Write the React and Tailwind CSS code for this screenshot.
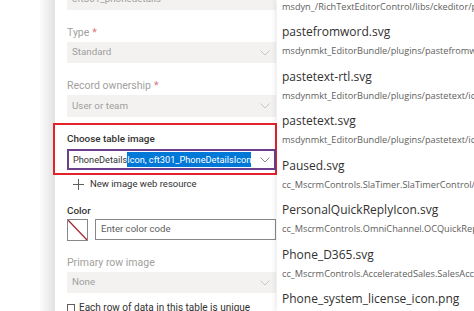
import React from 'react';

const font = { fontFamily: 'Roboto, "Open Sans", sans-serif' };

// Lista de recursos que aparece en el desplegable de la derecha
const resources = [
  { name: 'RichTextEditor.svg', path: 'msdyn_/RichTextEditorControl/libs/ckeditor/plugins/pastefromword/icons' },
  { name: 'pastefromword.svg', path: 'msdynmkt_EditorBundle/plugins/pastefromword/icons/pastefromword.svg' },
  { name: 'pastetext-rtl.svg', path: 'msdynmkt_EditorBundle/plugins/pastetext/icons/pastetext-rtl.svg' },
  { name: 'pastetext.svg', path: 'msdynmkt_EditorBundle/plugins/pastetext/icons/pastetext.svg' },
  { name: 'Paused.svg', path: 'cc_MscrmControls.SlaTimer.SlaTimerControl/img/Paused.svg' },
  { name: 'PersonalQuickReplyIcon.svg', path: 'cc_MscrmControls.OmniChannel.OCQuickReplyPreview/img/Personal.svg' },
  { name: 'Phone_D365.svg', path: 'cc_MscrmControls.AcceleratedSales.SalesAcceleratio...' },
  { name: 'Phone_system_license_icon.png', path: 'cc_MscrmControls.AcceleratedSales.SalesAcceleration/img' },
];

const Chevron = ({ color = '#a19f9d' }) => (
  <svg width="10" height="6" viewBox="0 0 10 6" fill="none" className="shrink-0">
    <path d="M0.5 0.5 L5 5 L9.5 0.5" stroke={color} strokeWidth="1" />
  </svg>
);

const DisabledInput = ({ text, chevron = true, className = '' }) => (
  <div className={`h-[21px] bg-[#f3f2f1] flex items-center justify-between pl-[5px] pr-[6px] ${className}`}>
    <span className="text-[9.8px] text-[#a19f9d]">{text}</span>
    {chevron && <Chevron color="#c8c6c4" />}
  </div>
);

const Label = ({ children, required, disabled, className = '' }) => (
  <div className={`h-[16px] leading-[16px] ${disabled ? 'text-[10.5px] text-[#a19f9d]' : 'text-[9.9px] text-[#323130] font-medium'} ${className}`}>
    {children}
    {required && <span className="text-[#d6757a] ml-[3px]">*</span>}
  </div>
);

function App() {
  return (
    <div className="w-[474px] h-[311px] overflow-hidden bg-white flex" style={font}>
      {/* sombra del panel */}
      <div className="w-[55px] shrink-0 bg-linear-to-r from-white from-70% to-[#e2e2e2]" />

      {/* Panel de propiedades */}
      <div className="w-[222px] shrink-0 pl-[12px] pr-[1px] bg-white">
        <DisabledInput text="cft301_phonedetails" chevron={false} className="mt-[-11px] items-end pb-[3px]" />

        <Label required disabled className="mt-[15px]">Type</Label>
        <DisabledInput text="Standard" className="mt-[1px]" />

        <Label required disabled className="mt-[15px]">Record ownership</Label>
        <DisabledInput text="User or team" className="mt-[1px] h-[22px]" />

        {/* Caja roja resaltada */}
        <div className="mt-[6px] ml-[-14px] mr-[-1px] border-2 border-[#e3232c] pl-[12px] pt-[6px] pb-[3px]">
          <Label>Choose table image</Label>
          <div className="mt-[2px] h-[21px] border-2 border-[#6b3f8c] flex items-center justify-between pl-[4px] pr-[4px] mr-[-1px]">
            <span className="text-[9.2px] text-[#323130] whitespace-nowrap">
              PhoneDetails<span className="bg-[#0078d7] text-white py-[2px]">Icon, cft301_PhoneDetailsIcon</span>
            </span>
            <Chevron color="#8a8886" />
          </div>
        </div>

        <div className="mt-[1px] h-[16px] flex items-center text-[9.5px] text-[#323130]">
          <svg width="11" height="11" viewBox="0 0 11 11" className="ml-[6px] shrink-0">
            <path d="M5.5 0 V11 M0 5.5 H11" stroke="#605e5c" strokeWidth="1" />
          </svg>
          <span className="ml-[6px]">New image web resource</span>
        </div>

        <Label className="mt-[11px]">Color</Label>
        <div className="flex gap-[7px]">
          <div className="w-[21px] h-[22px] border border-[#8a8886] shrink-0">
            <svg width="19" height="20" viewBox="0 0 19 20">
              <line x1="0" y1="0" x2="19" y2="20" stroke="#a4262c" strokeWidth="1.3" />
            </svg>
          </div>
          <div className="flex-1 h-[21px] border border-[#8a8886] flex items-center pl-[5px]">
            <span className="text-[9.6px] text-[#605e5c]">Enter color code</span>
          </div>
        </div>

        <Label disabled className="mt-[14px]">Primary row image</Label>
        <DisabledInput text="None" className="mt-[1px]" />

        <div className="mt-[7px] flex items-center gap-[4px] text-[10px] text-[#323130] whitespace-nowrap">
          <span className="w-[8px] h-[8px] border border-[#605e5c]" />
          <span>Each row of data in this table is unique</span>
        </div>
      </div>

      {/* Lista desplegable de recursos */}
      <div className="flex-1 min-w-0 pl-[5px] bg-white shadow-[-2px_0_5px_rgba(0,0,0,0.08)] z-10" style={{ fontFamily: '"Open Sans", sans-serif' }}>
        <div className="mt-[-29.5px]">
          {resources.map((r) => (
            <div key={r.name} className="h-[44.5px] pt-[10px]">
              <div className="h-[14px] leading-[14px] text-[12px] text-[#323130] whitespace-nowrap">{r.name}</div>
              <div className="mt-[6px] h-[12px] leading-[12px] text-[9.2px] text-[#605e5c] whitespace-nowrap overflow-hidden">{r.path}</div>
            </div>
          ))}
        </div>
      </div>
    </div>
  );
}

export default App;
